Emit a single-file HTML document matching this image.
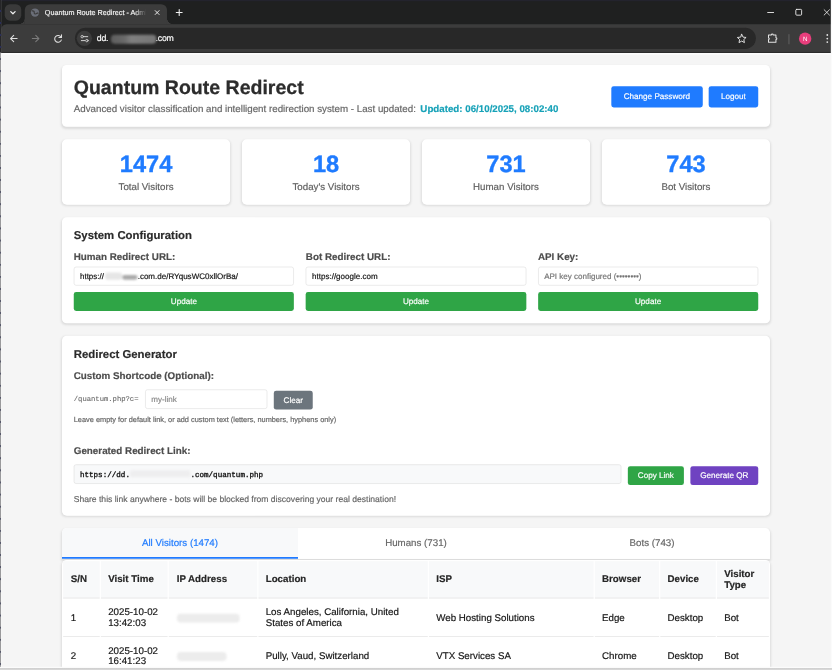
<!DOCTYPE html>
<html lang="en">
<head>
<meta charset="utf-8">
<title>Quantum Route Redirect - Admin</title>
<style>
*{box-sizing:border-box;margin:0;padding:0}
html,body{width:832px;height:670px;overflow:hidden;background:#f5f5f5}
body{font-family:"Liberation Sans",Arial,sans-serif;color:#333}
#stage{position:absolute;left:0;top:0;width:1410px;height:1136px;transform:scale(0.59007);transform-origin:0 0;overflow:hidden;background:#f5f5f5;-webkit-text-stroke:.3px;text-rendering:geometricPrecision}
/* ---------- browser chrome ---------- */
#chrome{position:absolute;left:0;top:0;width:1410px;height:90px;background:#1f2020}
#deskTop{position:absolute;left:0;top:0;width:1410px;height:2px;background:#23232d}
#toolbar{position:absolute;left:2px;top:41px;width:1408px;height:48px;background:#3c3c3c;border-radius:9px 0 0 0}
#chromeLine{position:absolute;left:0;top:88px;width:1410px;height:2px;background:#2b2b2b}
#tabsearch{position:absolute;left:7.500px;top:6.500px;width:28.500px;height:28.500px;border-radius:9px;background:#3a3a3a}
#tab{position:absolute;left:42px;top:7px;width:241px;height:34px;background:#3c3c3c;border-radius:10px 10px 0 0}
#tab:before,#tab:after{content:"";position:absolute;bottom:0;width:10px;height:10px}
#tab:before{left:-10px;background:radial-gradient(circle at 0 0,transparent 9.5px,#3c3c3c 10px)}
#tab:after{right:-10px;background:radial-gradient(circle at 100% 0,transparent 9.5px,#3c3c3c 10px)}
#tabtitle{position:absolute;left:34px;top:5.500px;width:172px;height:18px;font-size:12.2px;line-height:18px;color:#f4f4f4;white-space:nowrap;overflow:hidden;-webkit-mask-image:linear-gradient(90deg,#000 88%,transparent 100%);mask-image:linear-gradient(90deg,#000 88%,transparent 100%)}
#omni{position:absolute;left:127px;top:47.300px;width:1154px;height:35.500px;border-radius:18px;background:#282828}
#siteinfo{position:absolute;left:3.300px;top:4.700px;width:26px;height:26px;border-radius:13px;background:#3c3c3c}
#url{position:absolute;left:37px;top:9.200px;height:20px;font-size:14.8px;line-height:20px;color:#fff;white-space:nowrap;letter-spacing:-.35px}
#urlblur{position:absolute;left:60.500px;top:12px;width:77.500px;height:15px;background:linear-gradient(90deg,#5e5e5e,#6a6a6a 30%,#808080 45%,#767676 100%);border-radius:6px;filter:blur(1.4px)}
#avatar{position:absolute;left:1354.300px;top:55.200px;width:20.500px;height:20.500px;border-radius:11px;background:#e83e7c;color:#fff;font-size:10.5px;line-height:22.600px;text-align:center;-webkit-text-stroke:0}
#sep{position:absolute;left:1336px;top:58px;width:2px;height:17px;background:#5c5c5c}
.ci{position:absolute;overflow:visible}
/* ---------- page ---------- */
#edgeL{position:absolute;left:0;top:0;width:1.900px;height:1136px;background:repeating-linear-gradient(180deg,#9a9a9c 0,#9a9a9c 16px,#56586a 17px,#56586a 19px,#9a9a9c 20.500px)}
#edgeLT{position:absolute;left:0;top:0;width:1.900px;height:89px;background:repeating-linear-gradient(180deg,#262628 0,#262628 16px,#2a2e58 17px,#2a2e58 19.500px,#262628 20.500px)}
#edgeL2{position:absolute;left:1.900px;top:90px;width:2.500px;height:1044px;background:linear-gradient(90deg,#fdfdfd,#f5f5f5)}
#edgeR{position:absolute;left:1407.800px;top:0;width:3px;height:1136px;background:#fbfbfb}
#pageTop{position:absolute;left:2px;top:90px;width:1406px;height:4px;background:linear-gradient(#fff,#f5f5f5)}
#edgeB{position:absolute;left:0;top:1130px;width:1410px;height:6px;background:linear-gradient(#fbfbfb 0,#fbfbfb 1.500px,#cfcfcf 2.500px,#d4d4d4 4px,#dedede 6px)}
#page{position:absolute;left:2px;top:90px;width:1408px;height:1043px;background:#f5f5f5;overflow:hidden}
#container{position:absolute;left:103px;top:20px;width:1200px}
.card{background:#fff;border-radius:8px;box-shadow:0 2px 4px rgba(0,0,0,.1);padding:20px;margin-bottom:21px}
.header{position:relative;height:105px}
h1{position:absolute;left:20px;top:21.300px;font-size:33.1px;line-height:37px;color:#2c2c2c;font-weight:bold;white-space:nowrap;-webkit-text-stroke:.45px}
.sub{position:absolute;left:20px;top:65.500px;font-size:16.55px;line-height:18px;color:#666;white-space:nowrap}
.sub b{color:#17a2b8;margin-left:3px;font-size:16.5px}
.btn{display:inline-block;border:0;border-radius:4px;color:#fff;font-size:13.75px;line-height:16px;text-align:center;white-space:nowrap;font-family:inherit}
.hbtns{position:absolute;right:20px;top:35.600px;display:flex;gap:10px}
.hbtns .btn{padding:10.6px 21.200px 0;height:36px;background:#1f7bff}
.stats{display:flex;gap:20px;margin-bottom:21px}
.stat{flex:1;background:#fff;border-radius:8px;box-shadow:0 2px 4px rgba(0,0,0,.1);height:111px;text-align:center;padding-top:19.7px}
.num{font-size:40px;line-height:46px;font-weight:bold;color:#1f7bff;-webkit-text-stroke:.6px}
.lbl{font-size:16.5px;line-height:18px;color:#606060;margin-top:6.300px}
h3{font-size:19.3px;line-height:22px;font-weight:bold;color:#2a2a2a}
.flabel{display:block;font-size:16.65px;line-height:18px;font-weight:bold;color:#4d4d4d}
.inp{display:block;width:100%;height:32px;border:1px solid #ddd;border-radius:4px;background:#fff;padding:0 8px 0 9.5px;font-size:13.6px;line-height:31px;color:#111;white-space:nowrap;overflow:hidden}
.grid3{display:flex;gap:20px}
.grid3>div{flex:1}
.green{background:#2fa546}
.config{height:180px}
.config h3{margin-top:1px}
.config .flabel{margin-top:16px}
.config .inp{margin-top:7px}
.config .btn{display:block;height:32px;line-height:33px;margin-top:11px;overflow:hidden}
.gen{height:305px;position:relative;margin-bottom:21px}
.abs{position:absolute;white-space:nowrap}
.mono{font-family:"Liberation Mono","DejaVu Sans Mono",monospace}
/* tabs + table */
.tabs{display:flex;height:53px;background:#fff;border-radius:8px 8px 0 0;overflow:hidden;box-shadow:0 2px 4px rgba(0,0,0,.1);border-bottom:1px solid #ddd}
.tabx{flex:1;text-align:center;font-size:16.5px;line-height:52px;color:#666;border-bottom:4px solid transparent;height:53px}
.tabx.on{background:#f8f9fa;color:#1f7bff;border-bottom-color:#1c78ff}
.tablewrap{background:#fff;border-radius:8px;box-shadow:0 2px 4px rgba(0,0,0,.1);overflow:hidden;margin-top:1px}
table{width:1200px;border-collapse:separate;border-spacing:2px;table-layout:fixed;font-size:16.5px;line-height:18px}
th,td{padding:12px 11px 12px 12.300px;text-align:left;vertical-align:middle;border-bottom:1px solid #ddd;color:#151515}
th{background:#f8f9fa;font-weight:bold;color:#262626;height:63px}
tr>*:nth-child(1){padding-left:13px}
tr>*:nth-child(3){padding-left:13.500px}
td{height:63px}
.rb{display:inline-block;height:12px;vertical-align:-1px;background:#ddd;border-radius:5px;filter:blur(1.5px)}
.ipblur{display:block;height:15px;background:#ececec;border-radius:6px;filter:blur(2px)}
</style>
</head>
<body>
<div id="stage">
  <div id="chrome">
    <div id="deskTop"></div>
    <div id="tabsearch"></div>
    <div id="tab">
      <div id="tabtitle">Quantum Route Redirect - Admin</div>
    </div>
    <div id="toolbar"></div>
    <div id="omni">
      <div id="siteinfo"></div>
      <div id="url">dd.<span style="display:inline-block;width:80px"></span>.com</div>
      <div id="urlblur"></div>
    </div>
    <div id="sep"></div>
    <div id="avatar">N</div>
    <div id="chromeLine"></div>
    <svg class="ci" style="left:0;top:0" width="1410" height="90" viewBox="0 0 1410 90" fill="none" stroke="#e8e8e8" stroke-width="2" stroke-linecap="round" stroke-linejoin="round">
      <!-- tab search chevron -->
      <path d="M18.200 19.600l3.700 3.700 3.700-3.700" stroke="#f2f2f2" stroke-width="2.100"/>
      <!-- favicon globe -->
      <circle cx="59.300" cy="21.200" r="7" fill="#6a6e78" stroke="none"/>
      <path d="M54.500 18.500c2.500-.5 4 1 3.500 3s1.500 2.500 3 2 3-2.500 3.500-1" stroke="#3c3c3c" stroke-width="2"/>
      <!-- tab close -->
      <path d="M263 18l6.600 6.600M269.600 18l-6.600 6.600" stroke="#f2f2f2" stroke-width="1.600"/>
      <!-- new tab -->
      <path d="M303.700 16.200v10M298.700 21.200h10" stroke="#f2f2f2" stroke-width="1.800"/>
      <!-- window controls -->
      <path d="M1301 21.200h10" stroke="#f2f2f2" stroke-width="1.500"/>
      <rect x="1348.700" y="15.900" width="9.800" height="9.800" rx="1.500" stroke="#f2f2f2" stroke-width="1.500"/>
      <path d="M1396.700 16.500l9 9M1405.700 16.500l-9 9" stroke="#f2f2f2" stroke-width="1.400"/>
      <g transform="translate(0,0.300)">
      <!-- back -->
      <path d="M29 65h-10.500M23.200 59.700l-5.300 5.300 5.300 5.300" stroke="#dedede" stroke-width="1.800"/>
      <!-- forward -->
      <path d="M54.800 65h10.500M60.600 59.700l5.300 5.300-5.300 5.300" stroke="#7c7c7c" stroke-width="1.800"/>
      <!-- reload -->
      <path d="M103.600 62.800a5.800 5.800 0 1 0 .4 4.600" stroke="#dedede" stroke-width="1.800"/>
      <path d="M104.200 58.800v4.400h-4.400" stroke="#dedede" stroke-width="1.800"/>
      <!-- site info (tune) -->
      <path d="M142.800 61.800h5.900M137.900 68.500h5.800" stroke="#e4e4e4" stroke-width="1.500"/>
      <circle cx="139.300" cy="61.800" r="2.100" stroke="#e4e4e4" stroke-width="1.300"/>
      <circle cx="147.200" cy="68.500" r="2.100" stroke="#e4e4e4" stroke-width="1.300"/>
      <!-- star -->
      <path d="M1257 57.800l2.200 4.800 5.200.600-3.900 3.500 1.100 5.200-4.600-2.600-4.600 2.600 1.100-5.200-3.900-3.500 5.200-.600z" stroke="#e4e4e4" stroke-width="1.600"/>
      <!-- extensions -->
      <path d="M1302.400 59h4.800a1.600 1.600 0 0 1 3.200 0h4.600v4.600a1.600 1.600 0 0 1 0 3.200v4.600h-12.600v-4.900a1.300 1.300 0 0 0 0-2.600z" stroke="#e4e4e4" stroke-width="1.700"/>
      <!-- menu -->
      <circle cx="1402" cy="59" r="1.500" fill="#e4e4e4" stroke="none"/>
      <circle cx="1402" cy="65" r="1.500" fill="#e4e4e4" stroke="none"/>
      <circle cx="1402" cy="71" r="1.500" fill="#e4e4e4" stroke="none"/>
      </g>
    </svg>
  </div>

  <div id="page">
    <div id="container">
      <div class="card header">
          <h1>Quantum Route Redirect</h1>
          <div class="sub">Advanced visitor classification and intelligent redirection system - Last updated: <b>Updated: 06/10/2025, 08:02:40</b></div>
        <div class="hbtns">
          <span class="btn">Change Password</span>
          <span class="btn">Logout</span>
        </div>
      </div>

      <div class="stats">
        <div class="stat"><div class="num">1474</div><div class="lbl">Total Visitors</div></div>
        <div class="stat"><div class="num">18</div><div class="lbl">Today's Visitors</div></div>
        <div class="stat"><div class="num">731</div><div class="lbl">Human Visitors</div></div>
        <div class="stat"><div class="num">743</div><div class="lbl">Bot Visitors</div></div>
      </div>

      <div class="card config">
        <h3>System Configuration</h3>
        <div class="grid3">
          <div>
            <span class="flabel">Human Redirect URL:</span>
            <div class="inp">https://<span class="rb" style="width:29px;background:#e6e6e6;margin-left:2px"></span><span class="rb" style="width:26px;background:#aaa;height:8px;vertical-align:-1px"></span>.com.de/RYqusWC0xllOrBa/</div>
            <span class="btn green">Update</span>
          </div>
          <div>
            <span class="flabel">Bot Redirect URL:</span>
            <div class="inp">https://google.com</div>
            <span class="btn green">Update</span>
          </div>
          <div>
            <span class="flabel">API Key:</span>
            <div class="inp" style="color:#747474">API key configured (••••••••)</div>
            <span class="btn green">Update</span>
          </div>
        </div>
      </div>

      <div class="card gen">
        <h3 class="abs" style="left:20px;top:21px">Redirect Generator</h3>
        <span class="flabel abs" style="left:20px;top:60px">Custom Shortcode (Optional):</span>
        <span class="abs mono" style="left:20px;top:99px;font-size:12.2px;line-height:16px;color:#666;-webkit-text-stroke:.15px">/quantum.php?c=</span>
        <div class="inp abs" style="left:141px;top:91px;width:207px;height:33px;color:#888;line-height:31px">my-link</div>
        <span class="btn abs" style="left:359px;top:93px;width:66px;height:32px;line-height:33px;background:#6c757d">Clear</span>
        <div class="abs" style="left:20px;top:135px;font-size:12.5px;line-height:14px;color:#666">Leave empty for default link, or add custom text (letters, numbers, hyphens only)</div>
        <span class="flabel abs" style="left:20px;top:187px">Generated Redirect Link:</span>
        <div class="inp abs mono" style="left:20px;top:218px;width:928px;height:33px;background:#f8f9fa;color:#111;font-size:12.83px;line-height:33px;-webkit-text-stroke:.55px">https://dd.<span class="rb" style="width:102.500px;background:#eeeeef"></span>.com/quantum.php</div>
        <span class="btn abs green" style="left:959px;top:220.500px;width:95px;height:32px;line-height:31.4px">Copy Link</span>
        <span class="btn abs" style="left:1065px;top:220.500px;width:115px;height:32px;line-height:31.4px;background:#6f42c1">Generate QR</span>
        <div class="abs" style="left:20px;top:269px;font-size:14.52px;line-height:16px;color:#666">Share this link anywhere - bots will be blocked from discovering your real destination!</div>
      </div>

      <div class="tabs">
        <div class="tabx on">All Visitors (1474)</div>
        <div class="tabx">Humans (731)</div>
        <div class="tabx">Bots (743)</div>
      </div>
      <div class="tablewrap">
        <table>
          <colgroup><col style="width:62px"><col style="width:113px"><col style="width:150px"><col style="width:287px"><col style="width:279px"><col style="width:109px"><col style="width:94px"><col></colgroup>
          <tr><th>S/N</th><th>Visit Time</th><th>IP Address</th><th>Location</th><th>ISP</th><th>Browser</th><th>Device</th><th>Visitor Type</th></tr>
          <tr><td>1</td><td>2025-10-02 13:42:03</td><td><span class="ipblur" style="width:106px"></span></td><td>Los Angeles, California, United States of America</td><td>Web Hosting Solutions</td><td>Edge</td><td>Desktop</td><td>Bot</td></tr>
          <tr><td>2</td><td>2025-10-02 16:41:23</td><td><span class="ipblur" style="width:84px"></span></td><td>Pully, Vaud, Switzerland</td><td>VTX Services SA</td><td>Chrome</td><td>Desktop</td><td>Bot</td></tr>
        </table>
      </div>
    </div>
  </div>
  <div id="pageTop"></div>
  <div id="edgeL"></div>
  <div id="edgeL2"></div>
  <div id="edgeLT"></div>
  <div id="edgeR"></div>
  <div id="edgeB"></div>
</div>
</body>
</html>
